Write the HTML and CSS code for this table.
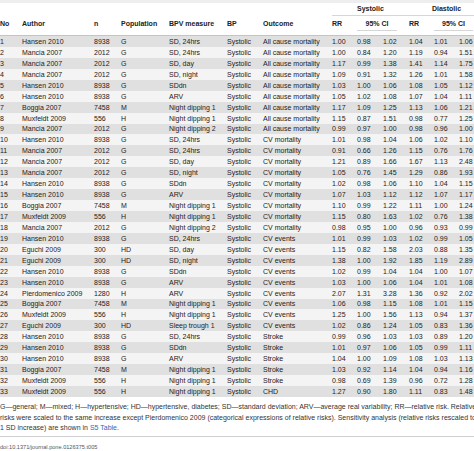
FILE: index.html
```html
<!DOCTYPE html>
<html lang="en">
<head>
<meta charset="utf-8">
<title>Table 5</title>
<link rel="stylesheet" href="styles.css">
</head>
<body>
<div class="figure">
  <div class="top-strip"></div>
  <table class="data">
    <colgroup>
      <col class="c-no"><col class="c-author"><col class="c-n"><col class="c-pop"><col class="c-bpv"><col class="c-bp"><col class="c-out">
      <col class="c-num"><col class="c-num2"><col class="c-num2"><col class="c-num"><col class="c-num"><col class="c-num">
    </colgroup>
    <thead>
      <tr class="h1">
        <th rowspan="2" class="lab">No</th>
        <th rowspan="2" class="lab">Author</th>
        <th rowspan="2" class="lab">n</th>
        <th rowspan="2" class="lab">Population</th>
        <th rowspan="2" class="lab">BPV measure</th>
        <th rowspan="2" class="lab">BP</th>
        <th rowspan="2" class="lab">Outcome</th>
        <th colspan="3" class="grp grp-s"><div class="grp-label">Systolic</div></th>
        <th colspan="3" class="grp grp-d"><div class="grp-label">Diastolic</div></th>
      </tr>
      <tr class="h2">
        <th class="lab">RR</th>
        <th colspan="2" class="ci ci-s"><div class="ci-label">95% CI</div></th>
        <th class="lab">RR</th>
        <th colspan="2" class="ci ci-d"><div class="ci-label">95% CI</div></th>
      </tr>
    </thead>
    <tbody>
      <tr><td>1</td><td>Hansen 2010</td><td>8938</td><td>G</td><td>SD, 24hrs</td><td>Systolic</td><td>All cause mortality</td><td>1.00</td><td>0.98</td><td>1.02</td><td>1.04</td><td>1.01</td><td>1.06</td></tr>
      <tr><td>2</td><td>Mancia 2007</td><td>2012</td><td>G</td><td>SD, 24hrs</td><td>Systolic</td><td>All cause mortality</td><td>1.00</td><td>0.84</td><td>1.20</td><td>1.19</td><td>0.94</td><td>1.51</td></tr>
      <tr><td>3</td><td>Mancia 2007</td><td>2012</td><td>G</td><td>SD, day</td><td>Systolic</td><td>All cause mortality</td><td>1.17</td><td>0.99</td><td>1.38</td><td>1.41</td><td>1.14</td><td>1.75</td></tr>
      <tr><td>4</td><td>Mancia 2007</td><td>2012</td><td>G</td><td>SD, night</td><td>Systolic</td><td>All cause mortality</td><td>1.09</td><td>0.91</td><td>1.32</td><td>1.26</td><td>1.01</td><td>1.58</td></tr>
      <tr><td>5</td><td>Hansen 2010</td><td>8938</td><td>G</td><td>SDdn</td><td>Systolic</td><td>All cause mortality</td><td>1.03</td><td>1.00</td><td>1.06</td><td>1.08</td><td>1.05</td><td>1.12</td></tr>
      <tr><td>6</td><td>Hansen 2010</td><td>8938</td><td>G</td><td>ARV</td><td>Systolic</td><td>All cause mortality</td><td>1.05</td><td>1.02</td><td>1.08</td><td>1.07</td><td>1.04</td><td>1.11</td></tr>
      <tr><td>7</td><td>Boggia 2007</td><td>7458</td><td>M</td><td>Night dipping 1</td><td>Systolic</td><td>All cause mortality</td><td>1.17</td><td>1.09</td><td>1.25</td><td>1.13</td><td>1.06</td><td>1.21</td></tr>
      <tr><td>8</td><td>Muxfeldt 2009</td><td>556</td><td>H</td><td>Night dipping 1</td><td>Systolic</td><td>All cause mortality</td><td>1.15</td><td>0.87</td><td>1.51</td><td>0.98</td><td>0.77</td><td>1.25</td></tr>
      <tr><td>9</td><td>Mancia 2007</td><td>2012</td><td>G</td><td>Night dipping 2</td><td>Systolic</td><td>All cause mortality</td><td>0.99</td><td>0.97</td><td>1.00</td><td>0.98</td><td>0.96</td><td>1.00</td></tr>
      <tr><td>10</td><td>Hansen 2010</td><td>8938</td><td>G</td><td>SD, 24hrs</td><td>Systolic</td><td>CV mortality</td><td>1.01</td><td>0.98</td><td>1.04</td><td>1.06</td><td>1.02</td><td>1.10</td></tr>
      <tr><td>11</td><td>Mancia 2007</td><td>2012</td><td>G</td><td>SD, 24hrs</td><td>Systolic</td><td>CV mortality</td><td>0.91</td><td>0.66</td><td>1.26</td><td>1.15</td><td>0.76</td><td>1.76</td></tr>
      <tr><td>12</td><td>Mancia 2007</td><td>2012</td><td>G</td><td>SD, day</td><td>Systolic</td><td>CV mortality</td><td>1.21</td><td>0.89</td><td>1.66</td><td>1.67</td><td>1.13</td><td>2.48</td></tr>
      <tr><td>13</td><td>Mancia 2007</td><td>2012</td><td>G</td><td>SD, night</td><td>Systolic</td><td>CV mortality</td><td>1.05</td><td>0.76</td><td>1.45</td><td>1.29</td><td>0.86</td><td>1.93</td></tr>
      <tr><td>14</td><td>Hansen 2010</td><td>8938</td><td>G</td><td>SDdn</td><td>Systolic</td><td>CV mortality</td><td>1.02</td><td>0.98</td><td>1.06</td><td>1.10</td><td>1.04</td><td>1.15</td></tr>
      <tr><td>15</td><td>Hansen 2010</td><td>8938</td><td>G</td><td>ARV</td><td>Systolic</td><td>CV mortality</td><td>1.07</td><td>1.03</td><td>1.12</td><td>1.12</td><td>1.07</td><td>1.17</td></tr>
      <tr><td>16</td><td>Boggia 2007</td><td>7458</td><td>M</td><td>Night dipping 1</td><td>Systolic</td><td>CV mortality</td><td>1.10</td><td>0.99</td><td>1.22</td><td>1.11</td><td>1.00</td><td>1.24</td></tr>
      <tr><td>17</td><td>Muxfeldt 2009</td><td>556</td><td>H</td><td>Night dipping 1</td><td>Systolic</td><td>CV mortality</td><td>1.15</td><td>0.80</td><td>1.63</td><td>1.02</td><td>0.76</td><td>1.38</td></tr>
      <tr><td>18</td><td>Mancia 2007</td><td>2012</td><td>G</td><td>Night dipping 2</td><td>Systolic</td><td>CV mortality</td><td>0.98</td><td>0.95</td><td>1.00</td><td>0.96</td><td>0.93</td><td>0.99</td></tr>
      <tr><td>19</td><td>Hansen 2010</td><td>8938</td><td>G</td><td>SD, 24hrs</td><td>Systolic</td><td>CV events</td><td>1.01</td><td>0.99</td><td>1.03</td><td>1.02</td><td>0.99</td><td>1.05</td></tr>
      <tr><td>20</td><td>Eguchi 2009</td><td>300</td><td>HD</td><td>SD, day</td><td>Systolic</td><td>CV events</td><td>1.15</td><td>0.82</td><td>1.58</td><td>2.03</td><td>0.88</td><td>1.35</td></tr>
      <tr><td>21</td><td>Eguchi 2009</td><td>300</td><td>HD</td><td>SD, night</td><td>Systolic</td><td>CV events</td><td>1.38</td><td>1.00</td><td>1.92</td><td>1.85</td><td>1.19</td><td>2.89</td></tr>
      <tr><td>22</td><td>Hansen 2010</td><td>8938</td><td>G</td><td>SDdn</td><td>Systolic</td><td>CV events</td><td>1.02</td><td>0.99</td><td>1.04</td><td>1.04</td><td>1.00</td><td>1.07</td></tr>
      <tr><td>23</td><td>Hansen 2010</td><td>8938</td><td>G</td><td>ARV</td><td>Systolic</td><td>CV events</td><td>1.03</td><td>1.00</td><td>1.06</td><td>1.04</td><td>1.01</td><td>1.08</td></tr>
      <tr><td>24</td><td>Pierdomenico 2009</td><td>1280</td><td>H</td><td>ARV</td><td>Systolic</td><td>CV events</td><td>2.07</td><td>1.31</td><td>3.28</td><td>1.36</td><td>0.92</td><td>2.02</td></tr>
      <tr><td>25</td><td>Boggia 2007</td><td>7458</td><td>M</td><td>Night dipping 1</td><td>Systolic</td><td>CV events</td><td>1.06</td><td>0.98</td><td>1.15</td><td>1.08</td><td>1.01</td><td>1.15</td></tr>
      <tr><td>26</td><td>Muxfeldt 2009</td><td>556</td><td>H</td><td>Night dipping 1</td><td>Systolic</td><td>CV events</td><td>1.25</td><td>1.00</td><td>1.56</td><td>1.13</td><td>0.94</td><td>1.37</td></tr>
      <tr><td>27</td><td>Eguchi 2009</td><td>300</td><td>HD</td><td>Sleep trough 1</td><td>Systolic</td><td>CV events</td><td>1.02</td><td>0.86</td><td>1.24</td><td>1.05</td><td>0.83</td><td>1.36</td></tr>
      <tr><td>28</td><td>Hansen 2010</td><td>8938</td><td>G</td><td>SD, 24hrs</td><td>Systolic</td><td>Stroke</td><td>0.99</td><td>0.96</td><td>1.03</td><td>1.03</td><td>0.89</td><td>1.20</td></tr>
      <tr><td>29</td><td>Hansen 2010</td><td>8938</td><td>G</td><td>SDdn</td><td>Systolic</td><td>Stroke</td><td>1.01</td><td>0.97</td><td>1.06</td><td>1.05</td><td>0.99</td><td>1.11</td></tr>
      <tr><td>30</td><td>Hansen 2010</td><td>8938</td><td>G</td><td>ARV</td><td>Systolic</td><td>Stroke</td><td>1.04</td><td>1.00</td><td>1.09</td><td>1.08</td><td>1.03</td><td>1.13</td></tr>
      <tr><td>31</td><td>Boggia 2007</td><td>7458</td><td>M</td><td>Night dipping 1</td><td>Systolic</td><td>Stroke</td><td>1.03</td><td>0.92</td><td>1.14</td><td>1.04</td><td>0.94</td><td>1.16</td></tr>
      <tr><td>32</td><td>Muxfeldt 2009</td><td>556</td><td>H</td><td>Night dipping 1</td><td>Systolic</td><td>Stroke</td><td>0.98</td><td>0.69</td><td>1.39</td><td>0.96</td><td>0.72</td><td>1.28</td></tr>
      <tr><td>33</td><td>Muxfeldt 2009</td><td>556</td><td>H</td><td>Night dipping 1</td><td>Systolic</td><td>CHD</td><td>1.27</td><td>0.90</td><td>1.80</td><td>1.11</td><td>0.83</td><td>1.48</td></tr>
    </tbody>
  </table>
  <div class="footnote">
    <p class="fn-line">G—general; M—mixed; H—hypertensive; HD—hypertensive, diabetes; SD—standard deviation; ARV—average real variability; RR—relative risk. Relative-</p>
    <p class="fn-line">risks were scaled to the same increase except Pierdomenico 2009 (categorical expressions of relative risks). Sensitivity analysis (relative risks rescaled to</p>
    <p class="fn-line">1 SD increase) are shown in <a class="link" href="#">S5 Table</a>.</p>
  </div>
  <div class="doi">doi:10.1371/journal.pone.0126375.t005</div>
</div>
</body>
</html>
```
FILE: styles.css
```css
html, body {
  margin: 0;
  padding: 0;
  background: #ffffff;
}
body {
  width: 474px;
  height: 451px;
  overflow: hidden;
  font-family: "Liberation Sans", Arial, sans-serif;
  font-size: 7px;
  color: #222222;
}
.figure {
  width: 474px;
}
.top-strip {
  height: 3px;
  background: #eeeeee;
}
.data {
  border-collapse: collapse;
  table-layout: fixed;
  width: 484px;
}
.c-no { width: 22px; }
.c-author { width: 72px; }
.c-n { width: 27px; }
.c-pop { width: 48px; }
.c-bpv { width: 58px; }
.c-bp { width: 36px; }
.c-out { width: 69px; }
.c-num { width: 25px; }
.c-num2 { width: 26px; }

.data th {
  padding: 0;
  font-weight: bold;
  text-align: left;
  line-height: 9px;
  white-space: nowrap;
}
.data thead {
  border-bottom: 1px solid #c4c4c4;
}
.h1 th.lab {
  vertical-align: bottom;
  padding-bottom: 7px;
}
.h1 th.grp {
  vertical-align: top;
}
.grp-s { padding-right: 12px; padding-left: 0; }
.grp-d { padding-right: 11px; }
.grp-label {
  text-align: center;
  padding-top: 1px;
  padding-bottom: 2px;
  border-bottom: 1px solid #d6d6d6;
}
.h2 th {
  vertical-align: bottom;
  padding-top: 3px;
  padding-bottom: 7px;
}
.h2 th.ci {
  padding-bottom: 4px;
}
.ci-s { padding-right: 12px !important; }
.ci-d { padding-right: 11px !important; }
.ci-label {
  text-align: center;
  padding-bottom: 2px;
  border-bottom: 1px solid #d6d6d6;
}
.data td {
  padding: 0;
  height: 10.94px;
  line-height: 9px;
  white-space: nowrap;
  vertical-align: middle;
}
.data tbody tr:nth-child(odd) {
  background: #e0e0e0;
}
.data tbody tr:nth-child(even) {
  background: #f4f4f4;
}
.footnote {
  padding-top: 5px;
  padding-bottom: 2px;
  border-bottom: 1px solid #cfcfcf;
  color: #333333;
}
.fn-line {
  margin: 0;
  line-height: 10.6px;
  white-space: nowrap;
}
.link {
  color: #3b66b0;
  text-decoration: none;
}
.doi {
  padding-top: 6px;
  font-size: 5.6px;
  line-height: 8px;
  color: #555555;
}
```
